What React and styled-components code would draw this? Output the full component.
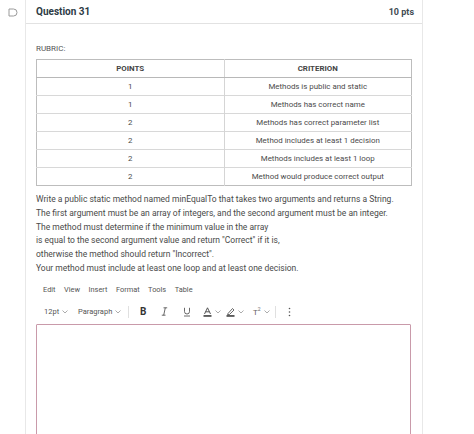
import React from "react";
import styled, { createGlobalStyle } from "styled-components";

const GlobalStyle = createGlobalStyle`
  html, body {
    margin: 0;
    padding: 0;
    background: #fff;
  }
  body {
    font-family: Roboto, "Noto Sans", sans-serif;
    color: #2d3b45;
  }
`;

const Page = styled.div`
  display: flex;
  align-items: flex-start;
  width: 474px;
  height: 434px;
  overflow: hidden;
`;

const FlagCol = styled.div`
  width: 25px;
  flex: none;
  display: flex;
  justify-content: center;
  padding-top: 8px;
`;

const Card = styled.div`
  width: 396px;
  min-height: 434px;
  flex: none;
  border-left: 1px solid #e8e8e8;
  border-right: 1px solid #e8e8e8;
  display: flex;
  flex-direction: column;
  & > * {
    flex-shrink: 0;
  }
`;

const Header = styled.div`
  height: 24px;
  display: flex;
  align-items: center;
  justify-content: space-between;
  padding: 0 8px 0 10px;
  border-bottom: 1px solid #e2e2e2;
  font-size: 10px;
  font-weight: 700;
  color: #2d3b45;
  box-sizing: border-box;
`;

const Pts = styled.span`
  font-size: 9px;
  color: #3f4a52;
`;

const Body = styled.div`
  padding: 20px 10px 0 10px;
  display: flex;
  flex-direction: column;
`;

const Label = styled.div`
  font-size: 8px;
  line-height: 10px;
  color: #555;
  margin-bottom: 5px;
`;

const Table = styled.table`
  width: 376px;
  border-collapse: collapse;
  font-size: 7.9px;
  color: #4a4a4a;
  table-layout: fixed;
  border: 1px solid #bdbdbd;
`;

const Th = styled.th`
  height: 17px;
  padding: 0;
  font-weight: 700;
  color: #444;
  text-align: center;
  border-left: 1px solid #d5d5d5;
  border-bottom: 1px solid #b8b8b8;
  &:first-child {
    border-left: none;
  }
`;

const Td = styled.td`
  height: 17px;
  padding: 0;
  text-align: center;
  border-left: 1px solid #d5d5d5;
  border-top: 1px solid #d8d8d8;
  &:first-child {
    border-left: none;
  }
`;

const Prompt = styled.div`
  margin-top: 7px;
  font-size: 8.5px;
  line-height: 13.8px;
  color: #4a4a4a;
`;

const MenuBar = styled.div`
  margin-top: 8px;
  padding-left: 7px;
  display: flex;
  gap: 8.5px;
  font-size: 7.4px;
  color: #555;
  height: 12px;
  align-items: center;
`;

const Toolbar = styled.div`
  margin-top: 9px;
  padding-left: 8px;
  height: 14px;
  display: flex;
  align-items: center;
  font-size: 7.5px;
  color: #555;
`;

const Item = styled.span`
  display: flex;
  align-items: center;
  gap: 3px;
  width: ${(p) => p.$w}px;
  flex: none;
  color: ${(p) => (p.$dark ? "#333" : "#555")};
`;

const Sep = styled.span`
  width: 1px;
  height: 12px;
  background: #e0e0e0;
  flex: none;
  margin: 0 ${(p) => p.$r}px 0 ${(p) => p.$l}px;
`;

const Bold = styled.span`
  font-weight: 700;
  font-size: 10px;
`;

const Super = styled.span`
  font-size: 8px;
  color: #666;
  sup {
    font-size: 5px;
  }
`;

const Editor = styled.div`
  margin-top: 5px;
  width: 375px;
  height: 160px;
  border: 1px solid #c99aaa;
  border-radius: 1px;
  box-sizing: border-box;
`;

const Chevron = () => (
  <svg width="6" height="4" viewBox="0 0 6 4">
    <path d="M0.5 0.5 L3 3 L5.5 0.5" fill="none" stroke="#888" strokeWidth="0.7" />
  </svg>
);

const rows = [
  ["1", "Methods is public and static"],
  ["1", "Methods has correct name"],
  ["2", "Methods has correct parameter list"],
  ["2", "Method includes at least 1 decision"],
  ["2", "Methods includes at least 1 loop"],
  ["2", "Method would produce correct output"],
];

const App = () => (
  <>
    <GlobalStyle />
    <Page>
      <FlagCol>
        <svg width="10" height="9" viewBox="0 0 10 9">
          <path
            d="M1 1 H5.5 A3.5 3.5 0 0 1 5.5 8 H1 Z"
            fill="none"
            stroke="#9a9a9a"
            strokeWidth="1"
            strokeLinejoin="round"
          />
        </svg>
      </FlagCol>
      <Card>
        <Header>
          <span>Question 31</span>
          <Pts>10 pts</Pts>
        </Header>
        <Body>
          <Label>RUBRIC:</Label>
          <Table>
            <thead>
              <tr>
                <Th>POINTS</Th>
                <Th>CRITERION</Th>
              </tr>
            </thead>
            <tbody>
              {rows.map(([pts, crit]) => (
                <tr key={crit}>
                  <Td>{pts}</Td>
                  <Td>{crit}</Td>
                </tr>
              ))}
            </tbody>
          </Table>
          <Prompt>
            Write a public static method named minEqualTo that takes two arguments and returns a String.
            <br />
            The first argument must be an array of integers, and the second argument must be an integer.
            <br />
            The method must determine if the minimum value in the array
            <br />
            is equal to the second argument value and return "Correct" if it is,
            <br />
            otherwise the method should return "Incorrect".
            <br />
            Your method must include at least one loop and at least one decision.
          </Prompt>
          <MenuBar>
            <span>Edit</span>
            <span>View</span>
            <span>Insert</span>
            <span>Format</span>
            <span>Tools</span>
            <span>Table</span>
          </MenuBar>
          <Toolbar>
            <Item $w={34}>
              12pt <Chevron />
            </Item>
            <Item $w={50}>
              Paragraph <Chevron />
            </Item>
            <Sep $l={0} $r={11} />
            <Item $w={21} $dark>
              <Bold>B</Bold>
            </Item>
            <Item $w={22}>
              <svg width="7" height="9" viewBox="0 0 7 9">
                <path d="M2.5 0.8 H6.2 M0.8 8.2 H4.5 M4.3 0.8 L2.7 8.2" stroke="#444" strokeWidth="0.8" fill="none" />
              </svg>
            </Item>
            <Item $w={20}>
              <svg width="8" height="10" viewBox="0 0 8 10">
                <path d="M1.5 0.8 V4.5 A2.5 2.5 0 0 0 6.5 4.5 V0.8 M1 9 H7" stroke="#444" strokeWidth="0.8" fill="none" />
              </svg>
            </Item>
            <Item $w={23}>
              <svg width="9" height="10" viewBox="0 0 9 10">
                <path d="M1.5 7 L4.5 0.8 L7.5 7 M2.6 4.8 H6.4" stroke="#444" strokeWidth="0.9" fill="none" />
                <rect x="0.5" y="8.2" width="8" height="1.5" fill="#333" />
              </svg>
              <Chevron />
            </Item>
            <Item $w={27}>
              <svg width="9" height="10" viewBox="0 0 9 10">
                <path d="M2 6.5 L6.5 1.5 L8 3 L3.5 7.5 L1.5 7.5 Z" stroke="#444" strokeWidth="0.8" fill="none" />
                <rect x="0.5" y="8.2" width="8" height="1.5" fill="#333" />
              </svg>
              <Chevron />
            </Item>
            <Item $w={21}>
              <Super>
                T<sup>2</sup>
              </Super>
              <Chevron />
            </Item>
            <Sep $l={1} $r={12} />
            <Item $w={6}>
              <svg width="3" height="10" viewBox="0 0 3 10">
                <circle cx="1.5" cy="1.5" r="0.8" fill="#555" />
                <circle cx="1.5" cy="5" r="0.8" fill="#555" />
                <circle cx="1.5" cy="8.5" r="0.8" fill="#555" />
              </svg>
            </Item>
          </Toolbar>
          <Editor />
        </Body>
      </Card>
    </Page>
  </>
);

export default App;
